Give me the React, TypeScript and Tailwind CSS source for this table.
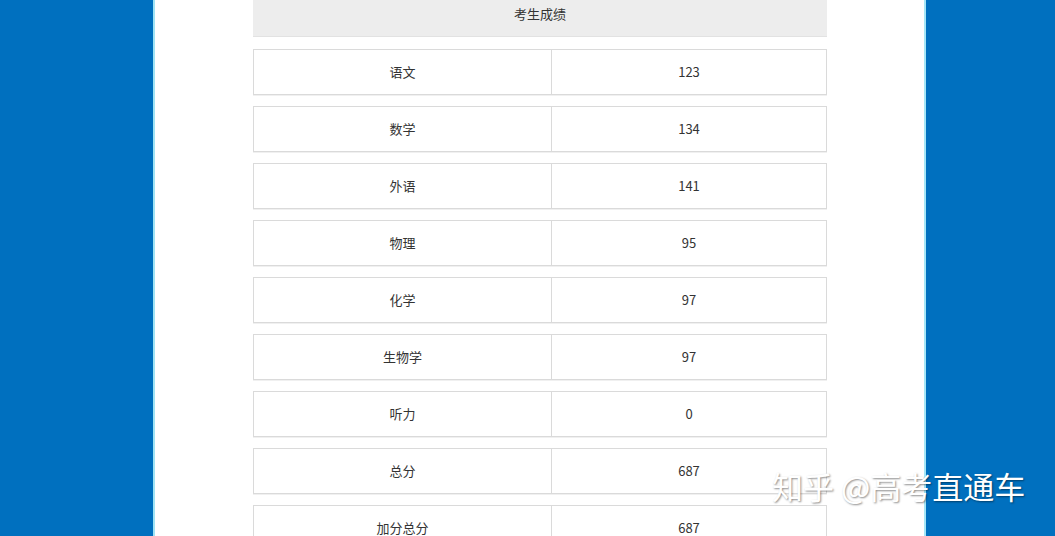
const rows: [string, string][] = [
  ['语文', '123'],
  ['数学', '134'],
  ['外语', '141'],
  ['物理', '95'],
  ['化学', '97'],
  ['生物学', '97'],
  ['听力', '0'],
  ['总分', '687'],
  ['加分总分', '687'],
];

export default function App() {
  return (
    <div
      className="relative flex h-[536px] w-[1055px] overflow-hidden bg-[#0070bf] text-[#333]"
      style={{ fontFamily: '"Noto Sans CJK SC", "Noto Sans", sans-serif' }}
    >
      <div className="w-[153px] shrink-0 bg-[#0070bf]" />
      <div className="w-[2px] shrink-0 bg-[#9fe3f5]" />
      <div className="w-[769px] shrink-0 bg-white pl-[98px]">
        <div className="-mt-[9px] flex w-[574px] flex-col gap-[11px]">
          <div className="mb-px flex h-[46px] items-center justify-center border-b border-[#e2e2e2] bg-[#ededed] text-[13px]">
            考生成绩
          </div>
          {rows.map(([name, score]) => (
            <div
              key={name}
              className="flex h-[46px] border border-[#dadada] text-[13px] shadow-[0_1px_0_#f0f0f0]"
            >
              <div className="flex w-[298px] items-center justify-center border-r border-[#dadada] pb-px">
                {name}
              </div>
              <div className="flex flex-1 items-center justify-center pb-px">{score}</div>
            </div>
          ))}
        </div>
      </div>
      <div className="w-[2px] shrink-0 bg-[#a5e6f7]" />
      <div className="flex-1 bg-[#0070bf]" />

      <div className="absolute left-[772px] top-[470px] whitespace-nowrap text-[31px] leading-none text-white [text-shadow:1px_1px_2px_rgba(0,0,0,0.45)]">
        知乎 @高考直通车
      </div>
    </div>
  );
}
